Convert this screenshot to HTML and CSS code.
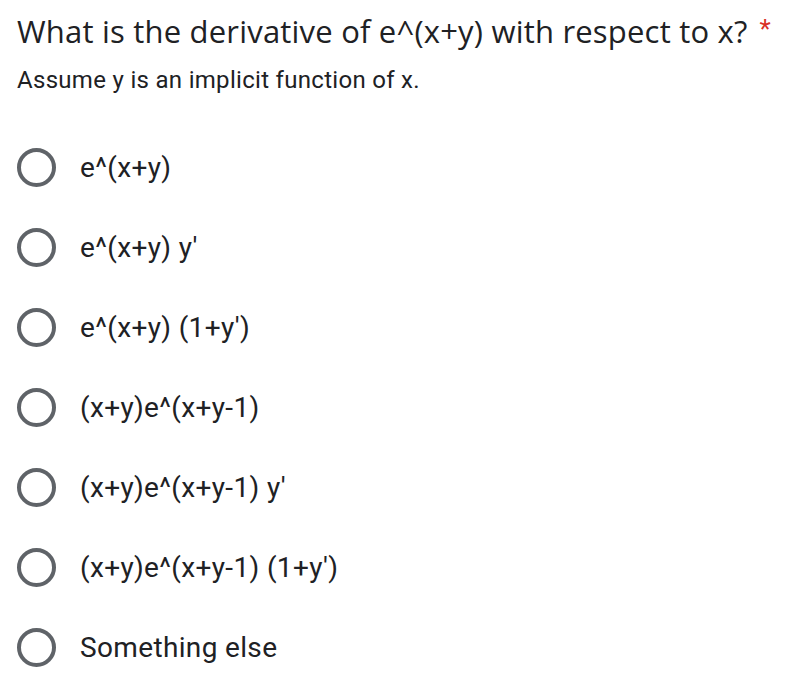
FILE: index.html
```html
<!DOCTYPE html>
<html>
<head>
<meta charset="utf-8">
<link rel="stylesheet" href="styles.css">
</head>
<body>
<div class="question">
  <div class="title">What is the derivative of e^(x+y) with respect to x?<span class="req">*</span></div>
  <div class="desc">Assume y is an implicit function of x.</div>
  <div class="options">
    <label class="opt"><span class="radio"></span><span class="txt">e^(x+y)</span></label>
    <label class="opt"><span class="radio"></span><span class="txt">e^(x+y) y'</span></label>
    <label class="opt"><span class="radio"></span><span class="txt">e^(x+y) (1+y')</span></label>
    <label class="opt"><span class="radio"></span><span class="txt">(x+y)e^(x+y-1)</span></label>
    <label class="opt"><span class="radio"></span><span class="txt">(x+y)e^(x+y-1) y'</span></label>
    <label class="opt"><span class="radio"></span><span class="txt">(x+y)e^(x+y-1) (1+y')</span></label>
    <label class="opt"><span class="radio"></span><span class="txt">Something else</span></label>
  </div>
</div>
</body>
</html>
```
FILE: styles.css
```css
html, body { margin: 0; padding: 0; background: #fff; }
body { width: 810px; height: 690px; overflow: hidden; color: #202124; }
.question { padding: 9px 0 0 17px; }
.title { font-family: "Open Sans", sans-serif; font-size: 31px; line-height: 40px; letter-spacing: 0.2px; white-space: nowrap; }
.req { font-family: Roboto, sans-serif; color: #d93025; font-size: 26px; margin-left: 12px; vertical-align: 5px; }
.desc { font-family: Roboto, sans-serif; font-size: 24px; line-height: 30px; letter-spacing: 0.3px; margin-top: 14px; }
.options { display: flex; flex-direction: column; margin-top: 32px; }
.opt { display: flex; align-items: center; height: 80px; }
.radio { width: 31px; height: 31px; border: 4px solid #5f6368; border-radius: 50%; flex: none; }
.txt { font-family: Roboto, sans-serif; font-size: 28px; letter-spacing: 0.35px; margin-left: 24px; }
```
